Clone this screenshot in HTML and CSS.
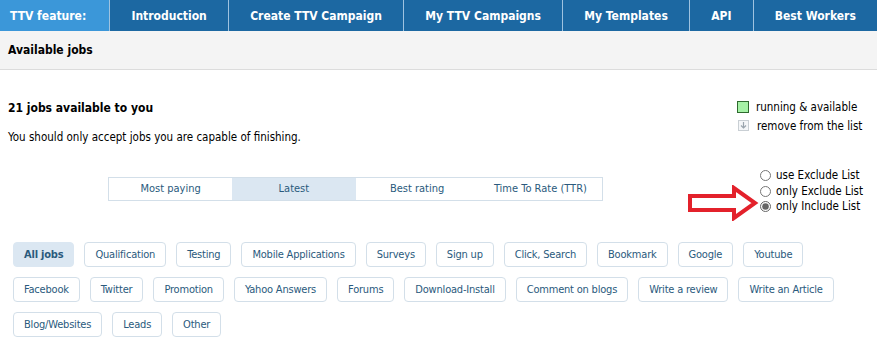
FILE: index.html
```html
<!DOCTYPE html>
<html lang="en">
<head>
    <meta charset="UTF-8">
    <title>Available jobs</title>
    <link rel="stylesheet" href="styles.css">
</head>
<body>
    <ul class="topnav">
        <li class="feature">TTV feature:</li>
        <li><a href="javascript:;">Introduction</a></li>
        <li><a href="javascript:;">Create TTV Campaign</a></li>
        <li><a href="javascript:;">My TTV Campaigns</a></li>
        <li><a href="javascript:;">My Templates</a></li>
        <li><a href="javascript:;">API</a></li>
        <li><a href="javascript:;">Best Workers</a></li>
    </ul>
    <div class="pagehead">Available jobs</div>

    <div class="content">
        <div class="intro">
            <div>
                <h2>21 jobs available to you</h2>
                <p>You should only accept jobs you are capable of finishing.</p>
            </div>
            <ul class="legend">
                <li><span class="sq"></span>running &amp; available</li>
                <li><span class="rm">
                    <svg width="9" height="9" viewBox="0 0 9 9"><path d="M4.5 1v6M2 4.5l2.5 2.5 2.5-2.5" fill="none" stroke="#9aa4ad" stroke-width="1.2"/></svg>
                </span>remove from the list</li>
            </ul>
        </div>

        <div class="options">
            <ul class="sortbar">
                <li><a href="javascript:;">Most paying</a></li>
                <li class="active"><a href="javascript:;">Latest</a></li>
                <li><a href="javascript:;">Best rating</a></li>
                <li><a href="javascript:;">Time To Rate (TTR)</a></li>
            </ul>
            <div class="lists">
                <!-- 红色箭头是标注 -->
                <svg class="arrow" width="72" height="36" viewBox="0 0 72 36">
                    <path d="M3 11H47V3L68 18L47 33V25H3Z" fill="#fff" stroke="#e3212b" stroke-width="4" stroke-linejoin="miter"/>
                </svg>
                <label><input type="radio" name="list">use Exclude List</label>
                <label><input type="radio" name="list">only Exclude List</label>
                <label><input type="radio" name="list" checked>only Include List</label>
            </div>
        </div>

        <div class="tags">
            <a class="active" href="javascript:;">All jobs</a>
            <a href="javascript:;">Qualification</a>
            <a href="javascript:;">Testing</a>
            <a href="javascript:;">Mobile Applications</a>
            <a href="javascript:;">Surveys</a>
            <a href="javascript:;">Sign up</a>
            <a href="javascript:;">Click, Search</a>
            <a href="javascript:;">Bookmark</a>
            <a href="javascript:;">Google</a>
            <a href="javascript:;">Youtube</a>
            <a href="javascript:;">Facebook</a>
            <a href="javascript:;">Twitter</a>
            <a href="javascript:;">Promotion</a>
            <a href="javascript:;">Yahoo Answers</a>
            <a href="javascript:;">Forums</a>
            <a href="javascript:;">Download-Install</a>
            <a href="javascript:;">Comment on blogs</a>
            <a href="javascript:;">Write a review</a>
            <a href="javascript:;">Write an Article</a>
            <a href="javascript:;">Blog/Websites</a>
            <a href="javascript:;">Leads</a>
            <a href="javascript:;">Other</a>
        </div>
    </div>
</body>
</html>
```

FILE: styles.css
```css
body {
    margin: 0;
    padding: 0;
    font-family: "DejaVu Sans Condensed", "DejaVu Sans", sans-serif;
    font-size: 11px;
    color: #000;
    background: #fff;
}
ul, li {
    list-style: none;
    margin: 0;
    padding: 0;
}
a {
    text-decoration: none;
}

/* 顶部导航 */
.topnav {
    display: flex;
    height: 31px;
    background-color: #1c68a2;
}
.topnav li {
    flex: 1 1 auto;
    display: flex;
    align-items: center;
    justify-content: center;
    padding: 0 20px;
    border-left: 1px solid #9fc3e0;
    font-size: 12px;
    font-weight: bold;
    white-space: nowrap;
}
.topnav li a {
    color: #fff;
}
.topnav .feature {
    flex: 0 0 auto;
    justify-content: flex-start;
    padding: 0 23px 0 10px;
    border-left: none;
    color: #fff;
    background-color: #3b97d9;
}

.pagehead {
    height: 38px;
    line-height: 38px;
    padding-left: 8px;
    background-color: #f4f4f4;
    border-bottom: 1px solid #dcdcdc;
    font-weight: bold;
    font-size: 12px;
}

.content {
    padding: 0 8px;
}
.intro {
    display: flex;
    justify-content: space-between;
    padding-top: 30px;
}
.intro h2 {
    margin: 0;
    font-size: 12px;
    line-height: 16px;
}
.intro p {
    margin: 13px 0 0;
    font-size: 11.5px;
    line-height: 16px;
}
.legend {
    width: 132px;
    margin-top: -3px;
}
.legend li {
    display: flex;
    align-items: center;
    height: 19px;
    font-size: 11.5px;
    white-space: nowrap;
}
.legend .sq {
    width: 10px;
    height: 10px;
    margin-right: 7px;
    border: 1px solid #2f6b2f;
    background-color: #a6f2a6;
}
.legend .rm {
    display: flex;
    align-items: center;
    justify-content: center;
    width: 9px;
    height: 9px;
    margin: 0 8px 0 1px;
    border: 1px solid #c9cfd4;
    background-color: #f4f6f8;
}

/* 排序和列表选项 */
.options {
    display: flex;
    align-items: flex-start;
    margin-top: 23px;
}
.sortbar {
    display: flex;
    width: 493px;
    margin: 9px 0 0 100px;
    border: 1px solid #d3dfe9;
}
.sortbar li {
    flex: 1;
    height: 22px;
    line-height: 22px;
    text-align: center;
}
.sortbar li a {
    color: #2a5a7d;
    font-size: 11px;
}
.sortbar .active {
    background-color: #dbe7f2;
}
.lists {
    position: relative;
    display: flex;
    flex-direction: column;
    margin-left: auto;
    width: 109px;
}
.lists label {
    display: flex;
    align-items: center;
    height: 15.5px;
    line-height: 15px;
    font-size: 11.5px;
    white-space: nowrap;
}
.lists input {
    width: 11px;
    height: 11px;
    margin: 0 5px 0 0;
    accent-color: #666;
}
.arrow {
    position: absolute;
    left: -73px;
    top: 17px;
}

/* 分类标签 */
.tags {
    display: flex;
    flex-wrap: wrap;
    gap: 10px 10px;
    margin-top: 27px;
    padding-left: 5px;
    width: 850px;
}
.tags a {
    display: block;
    height: 23px;
    line-height: 23px;
    padding: 0 10px;
    border: 1px solid #d3dfe9;
    border-radius: 4px;
    color: #2a5a7d;
    font-size: 11px;
    letter-spacing: -0.2px;
    white-space: nowrap;
}
.tags a.active {
    background-color: #dbe7f2;
    border-color: #dbe7f2;
    font-weight: bold;
}
```
